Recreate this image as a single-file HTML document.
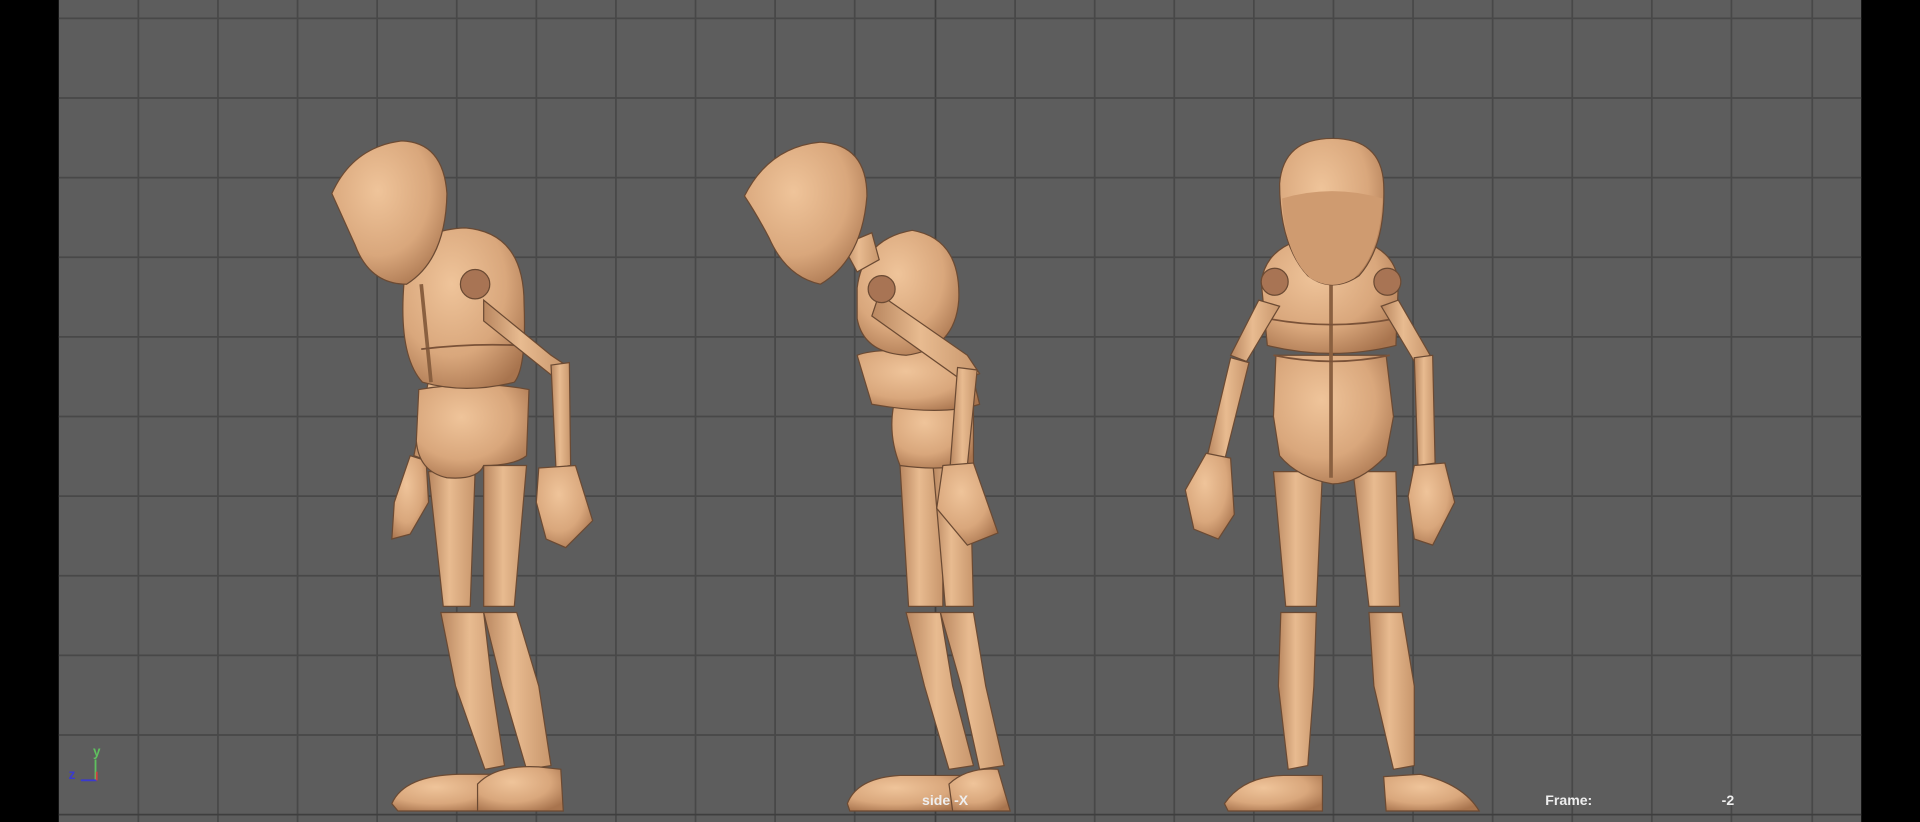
<!DOCTYPE html>
<html><head><meta charset="utf-8"><style>
html,body{margin:0;padding:0;background:#000;width:1920px;height:822px;overflow:hidden}
svg{display:block}
</style></head><body>
<svg width="1920" height="822" viewBox="0 0 1568 671" preserveAspectRatio="none" xmlns="http://www.w3.org/2000/svg">
<defs>
<radialGradient id="sk" cx="40%" cy="35%" r="75%"><stop offset="0" stop-color="#efc49a"/><stop offset="0.6" stop-color="#d9a77c"/><stop offset="1" stop-color="#a8744e"/></radialGradient>
<linearGradient id="lg" x1="0" x2="1"><stop offset="0" stop-color="#b98760"/><stop offset="0.45" stop-color="#e8bb90"/><stop offset="1" stop-color="#c8966c"/></linearGradient>
</defs>
<rect x="48" y="0" width="1472" height="671" fill="#5d5d5d"/>
<g stroke="#484848" stroke-width="1.4">
<line x1="113" y1="0" x2="113" y2="671"/><line x1="178" y1="0" x2="178" y2="671"/><line x1="243" y1="0" x2="243" y2="671"/><line x1="308" y1="0" x2="308" y2="671"/><line x1="373" y1="0" x2="373" y2="671"/><line x1="438" y1="0" x2="438" y2="671"/><line x1="503" y1="0" x2="503" y2="671"/><line x1="568" y1="0" x2="568" y2="671"/><line x1="633" y1="0" x2="633" y2="671"/><line x1="698" y1="0" x2="698" y2="671"/><line x1="764" y1="0" x2="764" y2="671" stroke="#3e3e3e"/><line x1="829" y1="0" x2="829" y2="671"/><line x1="894" y1="0" x2="894" y2="671"/><line x1="959" y1="0" x2="959" y2="671"/><line x1="1024" y1="0" x2="1024" y2="671"/><line x1="1089" y1="0" x2="1089" y2="671"/><line x1="1154" y1="0" x2="1154" y2="671"/><line x1="1219" y1="0" x2="1219" y2="671"/><line x1="1284" y1="0" x2="1284" y2="671"/><line x1="1349" y1="0" x2="1349" y2="671"/><line x1="1414" y1="0" x2="1414" y2="671"/><line x1="1480" y1="0" x2="1480" y2="671"/>
<line x1="48" y1="15" x2="1520" y2="15"/><line x1="48" y1="80" x2="1520" y2="80"/><line x1="48" y1="145" x2="1520" y2="145"/><line x1="48" y1="210" x2="1520" y2="210"/><line x1="48" y1="275" x2="1520" y2="275"/><line x1="48" y1="340" x2="1520" y2="340"/><line x1="48" y1="405" x2="1520" y2="405"/><line x1="48" y1="470" x2="1520" y2="470"/><line x1="48" y1="535" x2="1520" y2="535"/><line x1="48" y1="600" x2="1520" y2="600"/><line x1="48" y1="665" x2="1520" y2="665" stroke="#3e3e3e"/>
</g>
<g fill="url(#sk)" stroke="#6b4a33" stroke-width="1">
<!-- Figure 1 -->
<path d="M352 300 L338 372 L350 376 L365 305Z" fill="url(#lg)"/>
<path d="M335 372 L322 410 L320 440 L335 436 L350 410 L348 376Z"/>
<path d="M350 385 L388 385 L384 495 L362 495Z" fill="url(#lg)"/>
<path d="M360 500 L395 500 L402 560 L412 625 L396 628 L372 560Z" fill="url(#lg)"/>
<path d="M395 380 L430 380 L420 495 L395 495Z" fill="url(#lg)"/>
<path d="M395 500 L422 500 L440 560 L450 625 L430 628 L410 560Z" fill="url(#lg)"/>
<path d="M320 656 Q330 633 375 632 L408 632 L410 662 L325 662Z"/>
<path d="M390 640 Q405 624 440 626 L458 628 L460 662 L390 662Z"/>
<path d="M342 318 Q390 310 432 318 L430 372 Q420 380 395 380 Q390 392 365 390 Q342 385 340 360Z"/>
<path d="M330 230 Q330 188 380 186 Q428 190 428 248 Q430 300 420 312 Q380 322 345 312 Q325 290 330 230Z"/>
<path d="M344 232 L352 312" stroke="#8a6040" stroke-width="3" fill="none"/>
<path d="M344 285 Q385 280 425 282" fill="none" stroke="#7a5238" stroke-width="1.5"/>
<path d="M395 245 L450 290 L462 298 L455 310 L395 262Z" fill="url(#lg)"/>
<path d="M450 298 L465 296 L466 380 L454 382Z" fill="url(#lg)"/>
<path d="M440 382 L470 380 L484 425 L462 447 L446 440 L438 410Z"/>
<circle cx="388" cy="232" r="12" fill="#a87454"/>
<path d="M271 158 Q288 120 328 115 Q362 116 365 158 Q364 212 332 232 Q302 232 290 200 Q280 178 271 158Z"/>
<!-- Figure 2 -->
<path d="M735 380 L770 380 L770 495 L742 495Z" fill="url(#lg)"/>
<path d="M740 500 L768 500 L778 560 L795 625 L775 628 L755 560Z" fill="url(#lg)"/>
<path d="M762 380 L792 380 L795 495 L772 495Z" fill="url(#lg)"/>
<path d="M768 500 L795 500 L805 560 L820 625 L800 628 L785 560Z" fill="url(#lg)"/>
<path d="M692 656 Q700 635 735 633 L790 633 L790 662 L694 662Z"/>
<path d="M775 640 Q790 626 815 628 L825 662 L778 662Z"/>
<path d="M730 330 Q760 320 795 330 L795 378 Q770 385 735 380 Q725 355 730 330Z"/>
<path d="M700 290 Q720 282 790 290 L800 330 Q770 340 712 330Z"/>
<path d="M700 235 Q705 195 745 188 Q785 195 783 245 Q780 285 740 290 Q705 288 700 260Z"/>
<path d="M688 200 L712 190 L718 212 L700 222Z" fill="url(#lg)"/>
<path d="M718 240 L790 290 L800 305 L785 310 L712 258Z" fill="url(#lg)"/>
<path d="M782 300 L798 302 L790 380 L776 380Z" fill="url(#lg)"/>
<path d="M770 380 L795 378 L815 435 L790 445 L765 415Z"/>
<circle cx="720" cy="236" r="11" fill="#a87454"/>
<path d="M608 160 Q628 120 670 116 Q708 118 708 160 Q704 212 670 232 Q642 226 628 194 Q618 175 608 160Z"/>
<!-- Figure 3 -->
<path d="M1040 385 L1080 385 L1075 495 L1050 495Z" fill="url(#lg)"/>
<path d="M1046 500 L1075 500 L1073 560 L1068 625 L1052 628 L1044 560Z" fill="url(#lg)"/>
<path d="M1105 385 L1140 385 L1143 495 L1118 495Z" fill="url(#lg)"/>
<path d="M1118 500 L1145 500 L1155 560 L1155 625 L1138 628 L1122 560Z" fill="url(#lg)"/>
<path d="M1000 656 Q1015 634 1048 633 L1080 633 L1080 662 L1003 662Z"/>
<path d="M1130 634 L1160 632 Q1195 640 1208 662 L1132 662Z"/>
<path d="M1042 290 L1132 290 L1138 340 L1132 372 Q1110 395 1088 395 Q1060 390 1045 372 L1040 340Z"/>
<path d="M1030 230 Q1035 195 1085 192 Q1138 195 1142 230 L1140 282 Q1088 295 1035 282Z"/>
<path d="M1087 232 L1087 390" stroke="#8a6040" stroke-width="3" fill="none"/>
<path d="M1035 260 Q1088 270 1140 260 M1040 290 Q1088 300 1135 290" fill="none" stroke="#7a5238" stroke-width="1.5"/>
<path d="M1028 245 L1045 250 L1018 295 L1005 290Z" fill="url(#lg)"/>
<path d="M1005 292 L1020 296 L1000 376 L986 372Z" fill="url(#lg)"/>
<path d="M985 370 L1005 374 L1008 420 L995 440 L975 432 L968 400Z"/>
<path d="M1142 245 L1128 250 L1155 295 L1168 290Z" fill="url(#lg)"/>
<path d="M1155 292 L1170 290 L1172 378 L1158 380Z" fill="url(#lg)"/>
<path d="M1155 380 L1180 378 L1188 410 L1170 445 L1155 440 L1150 405Z"/>
<circle cx="1041" cy="230" r="11" fill="#a87454"/>
<circle cx="1133" cy="230" r="11" fill="#a87454"/>
<path d="M1045 150 Q1048 113 1088 113 Q1128 113 1130 150 Q1132 200 1110 225 Q1088 240 1068 225 Q1045 200 1045 150Z"/>
<path d="M1047 162 Q1088 150 1129 162 Q1127 208 1106 227 Q1088 238 1070 227 Q1049 208 1047 162Z" fill="#cf9b70" stroke="none"/>
</g>
<!-- axis -->
<line x1="78" y1="620" x2="78" y2="637" stroke="#5fc05f" stroke-width="1.5"/>
<line x1="66" y1="637" x2="79" y2="637" stroke="#3a3ad0" stroke-width="1.5"/>
<line x1="79" y1="630" x2="79" y2="637" stroke="#d04040" stroke-width="1.5"/>
<text x="76" y="617" font-family="Liberation Sans, sans-serif" font-size="11" font-weight="bold" fill="#5fc05f">y</text>
<text x="56" y="636" font-family="Liberation Sans, sans-serif" font-size="11" font-weight="bold" fill="#3a3ad0">z</text>
<g font-family="Liberation Sans, sans-serif" font-weight="bold" font-size="11.5" fill="#eeeeee">
<text x="753" y="657">side -X</text>
<text x="1262" y="657">Frame:</text>
<text x="1406" y="657">-2</text>
</g>
</svg>
</body></html>
